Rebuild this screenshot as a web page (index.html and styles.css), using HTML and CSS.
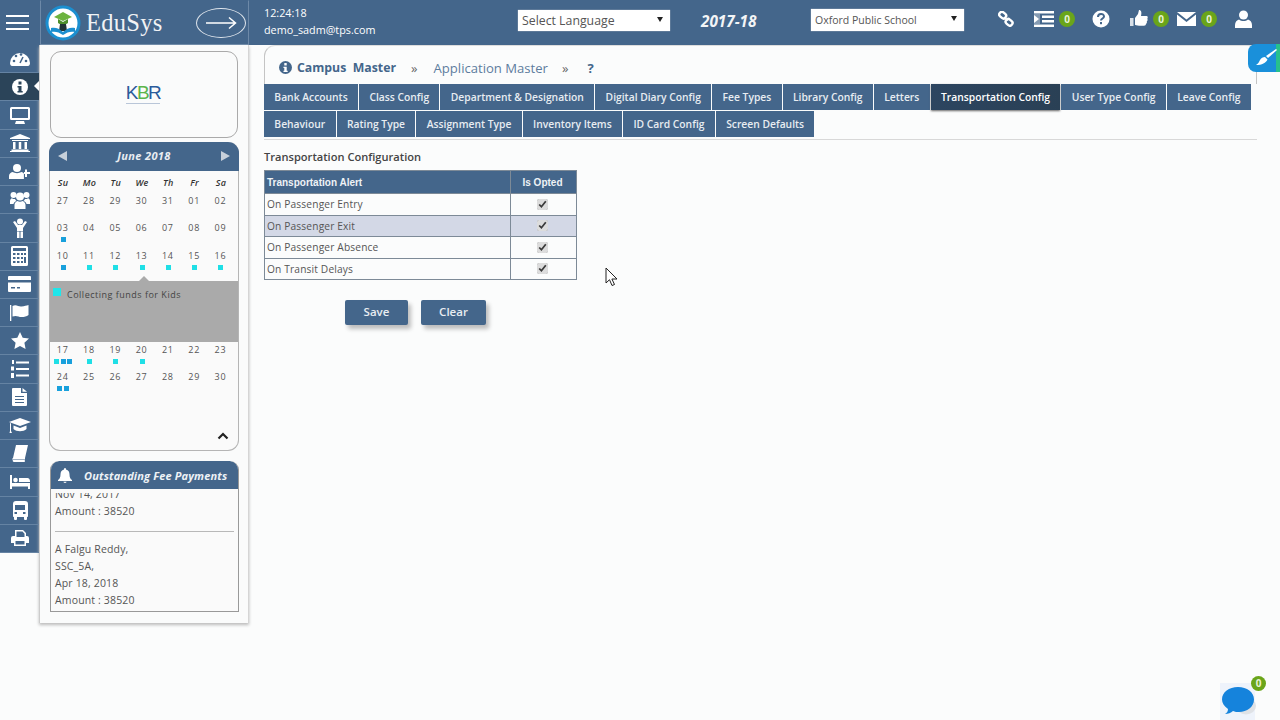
FILE: index.html
```html
<!DOCTYPE html>
<html lang="en">
<head>
<meta charset="utf-8">
<title>EduSys - Transportation Config</title>
<link rel="stylesheet" href="styles.css">
</head>
<body>
<header class="topbar">
  <button class="burger" aria-label="Menu"><span></span><span></span><span></span></button>
  <div class="brand">
    <svg class="brand-logo" width="36" height="36" viewBox="0 0 36 36">
      <circle cx="18" cy="18" r="16" fill="#fff" stroke="#1b8fd0" stroke-width="3"/>
      <path d="M9 12l9-5 9 5-9 4z" fill="#6cb33f"/>
      <path d="M13 14v4c3 2 7 2 10 0v-4l-5 3z" fill="#4e8f2a"/>
      <path d="M15 19h6l1 7h-8z" fill="#233"/>
      <path d="M6 23c4-1 8 0 12 4 4-4 8-5 12-4v4c-4-1-8 0-12 3-4-3-8-4-12-3z" fill="#1b8fd0"/>
    </svg>
    <span class="brand-name">EduSys</span>
    <span class="brand-toggle">
      <svg width="32" height="14" viewBox="0 0 32 14"><path d="M1 7h29M24 1.500l6.500 5.500-6.500 5.500" fill="none" stroke="#fff" stroke-width="1.500"/></svg>
    </span>
  </div>
  <div class="session"><div>12:24:18</div><div>demo_sadm@tps.com</div></div>
  <div class="select-wrap lang"><select aria-label="Language"><option>Select Language</option></select></div>
  <div class="year">2017-18</div>
  <div class="select-wrap school"><select aria-label="School"><option>Oxford Public School</option></select></div>
  <nav class="top-icons">
    <svg class="ti-link" width="16" height="16" viewBox="0 0 20 20" fill="none" stroke="#fff" stroke-width="3"><rect x="1.500" y="2" width="9" height="6.500" rx="3" transform="rotate(40 6 5)"/><rect x="9.500" y="11" width="9" height="6.500" rx="3" transform="rotate(40 14 14)"/><path d="M8 8l4 4" stroke-width="2"/></svg>
    <svg class="ti-list" width="20" height="16" viewBox="0 0 20 16" fill="#fff"><path d="M0 0h20v2.500H0zM8 4.500h12V7H8zM8 9h12v2.500H8zM0 13.500h20V16H0zM0 4l5 4-5 4z"/><path d="M0 3h6v10H0z" fill="#fff" opacity=".35"/></svg>
    <span class="badge b-list">0</span>
    <svg class="ti-help" width="18" height="18" viewBox="0 0 18 18"><circle cx="9" cy="9" r="8.500" fill="#fff"/><path d="M6 7c0-4 6-4 6-.5 0 2-3 2-3 4" fill="none" stroke="#44668b" stroke-width="2"/><rect x="8" y="12" width="2" height="2.200" fill="#44668b"/></svg>
    <svg class="ti-thumb" width="18" height="17" viewBox="0 0 18 17" fill="#fff"><path d="M0 8h3.500v8H0z" opacity=".8"/><path d="M5 8l3-4 1-4c2 0 3 2 2 6h5.500c1.500 0 1.500 2 .8 2.800.6 1 .4 2-.5 2.600.3 1 0 2-.8 2.400 0 1-.7 2-2 2H9c-2 0-4-1-4-1z"/></svg>
    <span class="badge b-thumb">0</span>
    <svg class="ti-mail" width="19" height="14" viewBox="0 0 19 14" fill="#fff"><path d="M0 0h19L9.500 7.500zM0 2.500V14h19V2.500L9.500 10z"/></svg>
    <span class="badge b-mail">0</span>
    <svg class="ti-user" width="17" height="18" viewBox="0 0 17 18" fill="#fff"><circle cx="8.500" cy="5" r="4.500"/><path d="M0 18v-3c0-3 2-5 4-5.500 2.500 2 6.500 2 9 0 2 .5 4 2.500 4 5.500v3z"/></svg>
  </nav>
</header>

<div class="layout">
  <aside class="rail">
    <a class="rail-item"><svg width="20" height="16" viewBox="0 0 20 16"><path d="M0 12a10 10 0 0 1 20 0c0 2-1 3-2 3H2c-1 0-2-1-2-3z" fill="#fff"/><circle cx="4" cy="10" r="1.300" fill="#44668b"/><circle cx="6" cy="5" r="1.300" fill="#44668b"/><circle cx="11" cy="3.500" r="1.300" fill="#44668b"/><circle cx="16" cy="10" r="1.300" fill="#44668b"/><path d="M10 12l3-6" stroke="#44668b" stroke-width="1.500"/></svg></a>
    <a class="rail-item active"><svg width="16" height="16" viewBox="0 0 16 16"><circle cx="8" cy="8" r="8" fill="#fff"/><rect x="6.500" y="2.500" width="3" height="3" fill="#2b4459"/><path d="M5.500 7h4v5h1.200v1.500H5.500V12h1V8.500h-1z" fill="#2b4459"/></svg></a>
    <a class="rail-item"><svg width="20" height="17" viewBox="0 0 20 17"><path d="M1.500 0h17A1.500 1.500 0 0 1 20 1.500v10a1.500 1.500 0 0 1-1.500 1.500h-17A1.500 1.500 0 0 1 0 11.500v-10A1.500 1.500 0 0 1 1.500 0zM2 2v9h16V2zM6 14h8l1 3H5z" fill="#fff" fill-rule="evenodd"/></svg></a>
    <a class="rail-item"><svg width="20" height="18" viewBox="0 0 20 18" fill="#fff"><path d="M10 0l10 4v1H0V4zM2 6h16v1H2zM3 8h2.500v7H3zM8.750 8h2.500v7h-2.500zM14.500 8H17v7h-2.500zM1.500 15.500h17V17h-17zM0 17h20v1H0z"/></svg></a>
    <a class="rail-item"><svg width="21" height="15" viewBox="0 0 21 15" fill="#fff"><circle cx="8" cy="4" r="4"/><path d="M0 15v-3c0-2 1.500-3.500 3.500-4 2.500 1.500 6.500 1.500 9 0 1 .2 1.800.7 2.400 1.400V15z"/><path d="M16 5.500h2V8h3v2h-3v3h-2v-3h-1V8h1z"/></svg></a>
    <a class="rail-item"><svg width="20" height="18" viewBox="0 0 20 18" fill="#fff"><circle cx="10" cy="5.500" r="4"/><circle cx="3.500" cy="4" r="3"/><circle cx="16.500" cy="4" r="3"/><path d="M4.500 18v-4c0-2 1.500-3.500 3-4 1.500 1 3.500 1 5 0 1.500.5 3 2 3 4v4z"/><path d="M0 13v-3c0-1.500 1-2.500 2-2.800 1 .8 2 1 3 .8.500 1 1 1.500 1.500 2-1.500.6-3 2-3 3z"/><path d="M20 13v-3c0-1.500-1-2.500-2-2.800-1 .8-2 1-3 .8-.5 1-1 1.500-1.500 2 1.500.6 3 2 3 3z"/></svg></a>
    <a class="rail-item"><svg width="14" height="20" viewBox="0 0 14 20" fill="#fff"><circle cx="7" cy="3.500" r="3"/><path d="M0 4l2-1 3 4h4l3-4 2 1-4 6v3H4v-3zM4 13.500h2.500V20H4zM7.500 13.500H10V20H7.500z"/></svg></a>
    <a class="rail-item"><svg width="17" height="20" viewBox="0 0 17 20"><path d="M1.500 0h14A1.500 1.500 0 0 1 17 1.500v17a1.500 1.500 0 0 1-1.500 1.500h-14A1.500 1.500 0 0 1 0 18.500v-17A1.500 1.500 0 0 1 1.500 0zM2 2v3h13V2zM2 7v2h2.500V7zM6 7v2h2.500V7zM10 7v2h2V7zM13 7v2h2V7zM2 11v2h2.500v-2zM6 11v2h2.500v-2zM10 11v2h2v-2zM13 11v6h2v-6zM2 15v2h2.500v-2zM6 15v2h2.500v-2zM10 15v2h2v-2z" fill="#fff" fill-rule="evenodd"/></svg></a>
    <a class="rail-item"><svg width="23" height="16" viewBox="0 0 23 16" fill="#fff"><path d="M1 0h21a1 1 0 0 1 1 1v3H0V1a1 1 0 0 1 1-1zM0 6.500h23V15a1 1 0 0 1-1 1H1a1 1 0 0 1-1-1zM3 11v1.500h4V11zM9 11v1.500h3V11z" fill-rule="evenodd"/></svg></a>
    <a class="rail-item"><svg width="19" height="16" viewBox="0 0 19 16" fill="#fff"><path d="M0 0h1.300v16H0z"/><path d="M2.500 1c4-2 6 1 9 .5 3-.5 5-1 7-1.500v10c-2 1.500-4 2-7 2s-5-2-9-.5z"/></svg></a>
    <a class="rail-item"><svg width="18" height="17" viewBox="0 0 18 17"><path d="M9 0l2.700 5.700 6.300.8-4.600 4.300 1.200 6.200L9 14l-5.600 3 1.200-6.200L0 6.500l6.300-.8z" fill="#fff"/></svg></a>
    <a class="rail-item"><svg width="18" height="18" viewBox="0 0 18 18" fill="#fff"><path d="M5 1.500h13v2H5zM5 8h13v2H5zM5 14.500h13v2H5zM1 0h2v4H1zM0 6.500h3v4H0zM0 13h3v5H0z"/></svg></a>
    <a class="rail-item"><svg width="15" height="18" viewBox="0 0 15 18"><path d="M0 1a1 1 0 0 1 1-1h8v5h6v12a1 1 0 0 1-1 1H1a1 1 0 0 1-1-1zM3 8v1h9V8zM3 11v1h9v-1zM3 14v1h9v-1zM10.500 0L15 3.800h-4.500z" fill="#fff" fill-rule="evenodd"/></svg></a>
    <a class="rail-item"><svg width="22" height="15" viewBox="0 0 22 15" fill="#fff"><path d="M11 0l11 4-11 4L0 4zM4.500 7.500L11 10l6.500-2.500v3.500c-3 3-10 3-13 0zM1 5l1 .4V13l1 2H.500L1 13z"/></svg></a>
    <a class="rail-item"><svg width="16" height="17" viewBox="0 0 16 17" fill="#fff"><path d="M4 0h12l-3 13H1zM0 14.500l.8-1.500H13v1.500zM.8 15h12v2H2c-1 0-1.500-1-1.200-2z"/></svg></a>
    <a class="rail-item"><svg width="20" height="14" viewBox="0 0 20 14" fill="#fff"><path d="M0 0h2v8h18v6h-2v-2.500H2V14H0z"/><circle cx="5.500" cy="5" r="2.300"/><path d="M9 3h8.500c1.500 0 2.500 1.200 2.500 3.500V7H9z"/></svg></a>
    <a class="rail-item"><svg width="16" height="19" viewBox="0 0 16 19"><path d="M3 0h10a3 3 0 0 1 3 3v12c0 .6-.4 1-1 1v2a1 1 0 0 1-1 1h-1a1 1 0 0 1-1-1v-2H5v2a1 1 0 0 1-1 1H3a1 1 0 0 1-1-1v-2c-.6 0-1-.4-1-1V3a3 3 0 0 1 3-3zM3 4v5h10V4zM2.500 11v2h2.500v-2zM11 11v2h2.500v-2z" fill="#fff" fill-rule="evenodd"/></svg></a>
    <a class="rail-item"><svg width="18" height="16" viewBox="0 0 18 16"><path d="M4 0h8l3 3v3h1a2 2 0 0 1 2 2v5h-3v3H3v-3H0V8a2 2 0 0 1 2-2h2zM5.500 1.500V7h8V3.800L11.500 1.500zM4.500 11v3.500h9V11z" fill="#fff" fill-rule="evenodd"/></svg></a>
  </aside>

  <aside class="side">
    <div class="logo-card"><span class="kbr"><b class="k">K</b><b class="b">B</b><b class="k">R</b></span></div>

    <section class="calendar">
      <div class="cal-head"><span class="arrow left"></span><span class="cal-title">June 2018</span><span class="arrow right"></span></div>
      <div class="cal-grid dow"><span>Su</span><span>Mo</span><span>Tu</span><span>We</span><span>Th</span><span>Fr</span><span>Sa</span></div>
      <div class="cal-grid week">
        <div>27</div><div>28</div><div>29</div><div>30</div><div>31</div><div>01</div><div>02</div>
      </div>
      <div class="cal-grid week">
        <div>03<i class="marks"><em class="mb"></em></i></div><div>04</div><div>05</div><div>06</div><div>07</div><div>08</div><div>09</div>
      </div>
      <div class="cal-grid week">
        <div>10<i class="marks"><em class="mb"></em></i></div><div>11<i class="marks"><em class="mc"></em></i></div><div>12<i class="marks"><em class="mc"></em></i></div><div>13<i class="marks"><em class="mc"></em></i></div><div>14<i class="marks"><em class="mc"></em></i></div><div>15<i class="marks"><em class="mc"></em></i></div><div>16<i class="marks"><em class="mc"></em></i></div>
      </div>
      <div class="cal-event"><em class="ev-mark"></em><span>Collecting funds for Kids</span></div>
      <div class="cal-grid week">
        <div>17<i class="marks"><em class="mc"></em><em class="mb"></em><em class="mb"></em></i></div><div>18<i class="marks"><em class="mc"></em></i></div><div>19<i class="marks"><em class="mc"></em></i></div><div>20<i class="marks"><em class="mc"></em></i></div><div>21</div><div>22</div><div>23</div>
      </div>
      <div class="cal-grid week">
        <div>24<i class="marks"><em class="mb"></em><em class="mb"></em></i></div><div>25</div><div>26</div><div>27</div><div>28</div><div>29</div><div>30</div>
      </div>
      <div class="cal-foot"><svg width="12" height="8" viewBox="0 0 12 8"><path d="M1.500 6.500L6 2l4.500 4.500" fill="none" stroke="#222" stroke-width="2.200"/></svg></div>
    </section>

    <section class="fees">
      <div class="fees-head">
        <svg width="14" height="15" viewBox="0 0 14 15" fill="#fff"><path d="M7 0c1 0 1 1 1 1.500 2.500.5 3.500 2.500 3.500 5 0 3 1 4.500 2.500 5.500v1H0v-1c1.500-1 2.500-2.500 2.500-5.500 0-2.500 1-4.500 3.500-5C6 1 6 0 7 0zM5.500 13.800h3C8.500 14.500 8 15 7 15s-1.500-.5-1.500-1.200z"/></svg>
        <span>Outstanding Fee Payments</span>
      </div>
      <div class="fees-body">
        <div class="fee clipped"><p>Nov 14, 2017</p><p>Amount : 38520</p></div>
        <hr>
        <div class="fee"><p>A Falgu Reddy,</p><p>SSC_5A,</p><p>Apr 18, 2018</p><p>Amount : 38520</p></div>
      </div>
    </section>
  </aside>

  <main class="main">
    <div class="crumbs">
      <svg width="13" height="13" viewBox="0 0 16 16"><circle cx="8" cy="8" r="8" fill="#44668b"/><rect x="6.500" y="2.500" width="3" height="3" fill="#fff"/><path d="M5.500 7h4v5h1.200v1.500H5.500V12h1V8.500h-1z" fill="#fff"/></svg>
      <b class="crumb-main">Campus&nbsp; Master</b>
      <span class="sep">»</span>
      <span class="crumb-sub">Application Master</span>
      <span class="sep last">»</span>
      <b class="crumb-q">?</b>
    </div>
    <nav class="tabs">
      <a>Bank Accounts</a><a>Class Config</a><a>Department &amp; Designation</a><a>Digital Diary Config</a><a>Fee Types</a><a>Library Config</a><a>Letters</a><a class="current">Transportation Config</a><a>User Type Config</a><a>Leave Config</a><a>Behaviour</a><a>Rating Type</a><a>Assignment Type</a><a>Inventory Items</a><a>ID Card Config</a><a>Screen Defaults</a>
    </nav>
    <h2 class="page-title">Transportation Configuration</h2>
    <table class="config">
      <thead><tr><th>Transportation Alert</th><th class="opt">Is Opted</th></tr></thead>
      <tbody>
        <tr><td>On Passenger Entry</td><td class="opt"><input type="checkbox" checked aria-label="On Passenger Entry"></td></tr>
        <tr class="hover"><td>On Passenger Exit</td><td class="opt"><input type="checkbox" checked aria-label="On Passenger Exit"></td></tr>
        <tr><td>On Passenger Absence</td><td class="opt"><input type="checkbox" checked aria-label="On Passenger Absence"></td></tr>
        <tr><td>On Transit Delays</td><td class="opt"><input type="checkbox" checked aria-label="On Transit Delays"></td></tr>
      </tbody>
    </table>
    <div class="actions"><button class="btn save">Save</button><button class="btn clear">Clear</button></div>
  </main>
</div>

<div class="brush">
  <svg width="22" height="20" viewBox="0 0 22 20" fill="#fff"><path d="M21 1l1 1-9 8-2-2z"/><path d="M10 9l2.500 2.500C11 15 7 17 1 17c2-1 3-3 4-5 1-2 3-3 5-3z"/></svg>
</div>
<div class="chat">
  <svg width="36" height="32" viewBox="0 0 36 32"><ellipse cx="25" cy="20" rx="10" ry="8.500" fill="#dfe2e6"/><path d="M17 1c9 0 16 5 16 12.500S26 26 18 26c-2 0-4 0-6-1-2 2-5 3-8 3 2-1 3-3 3-5C3 20 1 17 1 13.500 1 6 8 1 17 1z" fill="#1583dc"/></svg>
  <span class="badge chat-badge">0</span>
</div>
<svg class="cursor" width="14" height="20" viewBox="0 0 14 20"><path d="M1 1v15l3.500-3.300L7 18.500l2.500-1-2.600-5.500H12z" fill="#fff" stroke="#222" stroke-width="1"/></svg>
</body>
</html>
```
FILE: styles.css
```css
* { box-sizing: border-box; }
html, body { margin: 0; height: 100%; }
body {
  width: 1280px;
  height: 720px;
  overflow: hidden;
  background: #fbfcfc;
  color: #444;
  font-family: "Open Sans", "Liberation Sans", sans-serif;
  font-size: 11px;
  position: relative;
}
p { margin: 0; }

/* top bar */
.topbar {
  height: 45px;
  display: flex;
  align-items: center;
  background: #44668b;
  color: #fff;
}
.burger {
  width: 40px;
  height: 45px;
  padding: 0 11px 0 6px;
  background: none;
  border: 0;
  display: flex;
  flex-direction: column;
  justify-content: center;
  gap: 4.500px;
}
.burger span { display: block; height: 2px; background: #fff; }
.brand {
  width: 209px;
  height: 45px;
  display: flex;
  align-items: center;
  border: 1px solid #6d89a8;
  border-top-color: #44668b;
  padding-left: 4px;
}
.brand-logo { flex: none; }
.brand-name {
  margin-left: 5px;
  font-family: "Liberation Serif", serif;
  font-size: 24.500px;
  letter-spacing: .3px;
  color: #f1f3f5;
}
.brand-toggle {
  margin-left: auto;
  margin-right: 2px;
  width: 50px;
  height: 30px;
  border: 1px solid #dfe5ec;
  border-radius: 50%;
  display: flex;
  align-items: center;
  justify-content: center;
}
.session {
  margin: 0 0 4px 15px;
  width: 254px;
  font-size: 10.800px;
  line-height: 17px;
}
.select-wrap {
  position: relative;
  margin-bottom: 5px;
  background: #fff;
  box-shadow: 0 0 1px #ddd;
}
.select-wrap::after {
  content: "";
  position: absolute;
  top: 7px;
  right: 7px;
  border: 3px solid transparent;
  border-top: 5px solid #222;
  border-bottom: 0;
}
.select-wrap select {
  width: 100%;
  height: 100%;
  border: 0;
  padding: 0 4px;
  appearance: none;
  background: transparent;
  color: #555;
  font-family: inherit;
}
.lang { width: 152px; height: 21px; }
.lang select { font-size: 12.300px; }
.school { width: 153px; height: 22px; margin-left: 43px; }
.school select { font-size: 10.500px; }
.year {
  margin: 0 0 4px 31px;
  width: 67px;
  font-size: 15.300px;
  font-weight: 700;
  font-style: italic;
  color: #f3f5f7;
}
.top-icons {
  margin: 0 0 8px 32px;
  display: flex;
  align-items: center;
  height: 36px;
}
.ti-link { margin-left: 2px; }
.ti-list { margin-left: 20px; }
.ti-help { margin-left: 17px; }
.ti-thumb { margin-left: 20px; }
.ti-mail { margin-left: 8px; }
.ti-user { margin-left: 18px; }
.badge {
  flex: none;
  width: 16px;
  height: 16px;
  border-radius: 50%;
  background: #6aa51a;
  color: #e8f2d8;
  font-size: 10px;
  font-weight: 700;
  line-height: 16px;
  text-align: center;
}
.b-list, .b-thumb, .b-mail { margin-left: 5px; }

/* page columns */
.layout {
  display: flex;
  align-items: flex-start;
}

/* icon rail */
.rail {
  flex: none;
  width: 39px;
  height: 508px;
  display: grid;
  grid-template-rows: repeat(18, 1fr);
  background: #44668b;
}
.rail-item {
  position: relative;
  display: flex;
  align-items: center;
  justify-content: center;
  border-bottom: 1px solid #6583a3;
}
.rail-item.active { background: #2b4459; }
.rail-item.active::after {
  content: "";
  position: absolute;
  right: 0;
  top: 8px;
  border: 5.500px solid transparent;
  border-right: 5px solid #fff;
  border-left: 0;
}

/* side panel */
.side {
  flex: none;
  width: 210px;
  height: 578px;
  padding: 6px 9px 0 9px;
  background: #fafbfb;
  border-left: 1px solid #ccc;
  border-right: 1px solid #d5d5d5;
  box-shadow: 0 2px 3px #bbb;
}
.logo-card {
  width: 188px;
  height: 87px;
  margin-left: 1px;
  border: 1px solid #aaa;
  border-radius: 11px;
  display: flex;
  align-items: center;
  justify-content: center;
}
.kbr {
  font-family: "Liberation Sans", sans-serif;
  font-size: 19px;
  line-height: 20px;
  letter-spacing: -1.500px;
  margin-right: 2px;
  margin-bottom: 2px;
  border-bottom: 1px solid #b9c6d8;
}
.kbr b { font-weight: 400; }
.kbr .k { color: #2b5b9b; }
.kbr .b { color: #5cb54a; }

.calendar {
  width: 190px;
  height: 309px;
  margin-top: 4px;
  border: 1px solid #b5b5b5;
  border-top: 0;
  border-radius: 11px;
  background: #fafafa;
}
.cal-head {
  height: 29px;
  margin: 0 -1px;
  border-radius: 11px 11px 0 0;
  background: #44668b;
  display: flex;
  align-items: center;
  justify-content: space-between;
  padding: 0 9px 2px;
}
.cal-title {
  color: #e9edf2;
  font-size: 11px;
  font-weight: 700;
  font-style: italic;
  letter-spacing: .35px;
}
.arrow { border: 5px solid transparent; }
.arrow.left { border-right: 9px solid #c7d0da; border-left: 0; }
.arrow.right { border-left: 9px solid #c7d0da; border-right: 0; }
.cal-grid {
  display: grid;
  grid-template-columns: repeat(7, 26.300px);
  text-align: center;
  color: #555;
  font-size: 9px;
  letter-spacing: .7px;
}
.dow {
  height: 22px;
  align-items: center;
  font-weight: 600;
  font-style: italic;
  color: #333;
  letter-spacing: .3px;
}
.week { height: 27.300px; padding-top: 1px; line-height: 13px; }
.week > div { margin-left: -1px; }
.marks {
  display: flex;
  justify-content: center;
  gap: 1.500px;
  height: 5px;
  margin: 3px 0 0 1px;
}
.marks em { display: block; width: 5px; height: 5px; }
.mb { background: #18a0dc; }
.mc { background: #1fdfe6; }
.cal-event {
  position: relative;
  height: 61px;
  margin-top: 6px;
  background: #aaa;
  display: flex;
  align-items: flex-start;
  padding: 7px 3px;
  color: #444;
  font-size: 9px;
  letter-spacing: .5px;
}
.cal-event::before {
  content: "";
  position: absolute;
  top: -5px;
  left: 89px;
  border: 5px solid transparent;
  border-bottom: 5px solid #aaa;
  border-top: 0;
}
.ev-mark { width: 8px; height: 8px; margin-right: 6px; background: #1fe6ea; }
.cal-foot {
  display: flex;
  justify-content: flex-end;
  padding: 36px 9px 0 0;
}

.fees {
  width: 189px;
  height: 151px;
  margin: 10px 0 0 1px;
  border: 1px solid #999;
  border-top: 0;
  overflow: hidden;
  border-radius: 9px 9px 0 0;
  background: #fafafa;
}
.fees-head {
  height: 28px;
  margin: 0 -1px;
  display: flex;
  align-items: center;
  padding-left: 8px;
  gap: 12px;
  background: #44668b;
  color: #eef2f6;
  font-size: 11px;
  font-weight: 700;
  font-style: italic;
  letter-spacing: .15px;
  border-radius: 9px 9px 0 0;
}
.fees-body {
  height: 118px;
  margin-top: 4px;
  overflow: hidden;
  padding: 0 4px 0 4px;
  color: #555;
  font-size: 10.500px;
  line-height: 17px;
  letter-spacing: .15px;
}
.fee.clipped { margin-top: -7px; }
.fees-body hr {
  height: 1px;
  margin: 11px 0 9px;
  border: 0;
  background: #b8b8b8;
}

/* main */
.main {
  flex: none;
  width: 1008px;
  margin-left: 15px;
}
.crumbs {
  width: 993px;
  height: 39px;
  display: flex;
  align-items: center;
  padding: 5px 0 0 14px;
  border: 1px solid #c4c4c4;
  border-top-color: #ddd;
  border-bottom: 0;
  border-radius: 11px 0 0 0;
  font-size: 13.100px;
}
.crumb-main { margin-left: 5px; color: #44668b; font-size: 12.300px; font-weight: 700; }
.crumb-sub { color: #5d7d9e; }
.sep { margin: 0 16px 0 15px; color: #666; }
.sep.last { margin: 0 19px 0 14px; }
.crumb-q { color: #44668b; }
.tabs {
  width: 993px;
  height: 56px;
  display: flex;
  flex-wrap: wrap;
  align-content: flex-start;
  gap: 1px;
  border-bottom: 1px solid #d8d8d8;
}
.tabs a {
  height: 26px;
  padding: 0 10.350px;
  display: flex;
  align-items: center;
  background: #44668b;
  color: #e8edf2;
  font-size: 10.300px;
  font-weight: 600;
}
.tabs a.current {
  background: linear-gradient(90deg, #2c4560, #2a4055);
  color: #fff;
  box-shadow: 0 1px 2px #666;
}
.page-title {
  margin: 10px 0 6px;
  color: #444;
  font-size: 11.100px;
  font-weight: 600;
  line-height: 14px;
}
.config {
  width: 313px;
  border-collapse: collapse;
  font-size: 10.200px;
  letter-spacing: .15px;
  color: #555;
}
.config th, .config td {
  height: 21.500px;
  padding: 0 2px;
  border: 1px solid #7d8a97;
  text-align: left;
}
.config th {
  height: 23px;
  background: #44668b;
  color: #eef2f6;
  font-family: "Liberation Sans", sans-serif;
  font-size: 10px;
  font-weight: 700;
  letter-spacing: 0;
}
.config .opt { width: 66px; padding: 0 2px 0 0; text-align: center; }
.config input {
  display: block;
  width: 11px;
  height: 11px;
  margin: 0 auto;
  accent-color: #dcdcdc;
}
.config .hover td { background: #d3d8e6; }
.actions {
  display: flex;
  gap: 13px;
  margin: 20px 0 0 81px;
}
.btn {
  height: 25px;
  padding: 0 0 2px;
  border: 0;
  border-radius: 2px;
  background: #44668b;
  color: #e8edf2;
  font-family: inherit;
  font-size: 11.500px;
  font-weight: 600;
  box-shadow: 3px 4px 4px #bdbdbd;
}
.save { width: 63px; }
.clear { width: 65px; }

/* overlays */
.brush {
  position: absolute;
  top: 44px;
  right: 0;
  width: 32px;
  height: 28px;
  padding: 4px 0 0 7px;
  background: #1a90da;
  border-radius: 8px 0 0 8px;
  border-right: 4px solid #27c18c;
}
.chat { position: absolute; left: 1220px; top: 676px; width: 60px; height: 44px; }
.chat::before {
  content: "";
  position: absolute;
  left: 0;
  top: 7px;
  width: 35px;
  height: 37px;
  background: #eef3fb;
}
.chat svg { position: absolute; left: 1px; top: 10px; }
.chat-badge { position: absolute; left: 31px; top: 0; width: 15px; height: 15px; line-height: 15px; }
.cursor { position: absolute; left: 605px; top: 267px; }
```
